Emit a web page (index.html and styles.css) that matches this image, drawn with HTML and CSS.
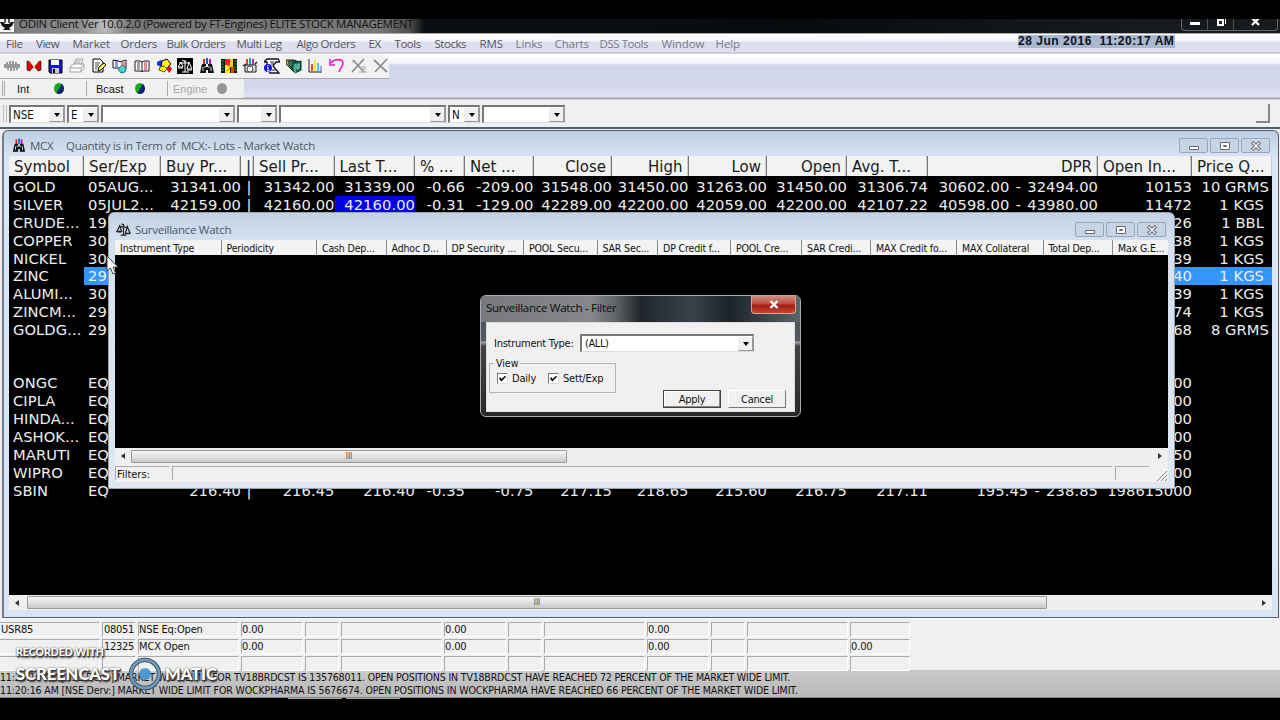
FILE: index.html
```
<!DOCTYPE html>
<html lang="en">
<head>
    <meta charset="UTF-8">
    <meta name="viewport" content="width=device-width, initial-scale=1.0">
    <title>ODIN Client</title>
    <link rel="stylesheet" href="styles.css">
</head>
<body>
    <header class="titlebar">
        <svg class="app-icon" width="14" height="13" viewBox="0 0 14 13"><rect width="14" height="13" fill="#f4f4f4"/><path d="M0 3h3l2 2h4l2-2h3l-2 4-3 2 2 2H3l2-2-3-2z" fill="#111"/><path d="M4 0h2v4H4zM8 0h2v4H8z" fill="#555"/></svg>
        <span class="app-title">ODIN Client Ver 10.0.2.0 (Powered by FT-Engines) ELITE STOCK MANAGEMENT</span>
        <div class="app-buttons">
            <span><svg width="12" height="10" viewBox="0 0 12 10"><path d="M1 3h10v3H1z" fill="#fff"/></svg></span>
            <span><svg width="12" height="10" viewBox="0 0 12 10"><path d="M2 0h7v7H2zM10 0h1v5h-1z" fill="#fff"/><path d="M4 2h3v3H4z" fill="#222"/></svg></span>
            <span class="wide"><svg width="12" height="10" viewBox="0 0 12 10"><path d="M2 -1l7 7M9 -1L2 6" stroke="#fff" stroke-width="2.4"/></svg></span>
        </div>
    </header>

    <nav class="menu">
        <span class="m1">File</span><span class="m2">View</span><span class="m3">Market</span><span class="m4">Orders</span><span class="m5">Bulk Orders</span><span class="m6">Multi Leg</span><span class="m7">Algo Orders</span><span class="m8">EX</span><span class="m9">Tools</span><span class="m10">Stocks</span><span class="m11">RMS</span><span class="m12 dim">Links</span><span class="m13 dim">Charts</span><span class="m14 dim">DSS Tools</span><span class="m15 dim">Window</span><span class="m16 dim">Help</span>
        <time class="clock">28 Jun 2016&nbsp; 11:20:17 AM</time>
    </nav>

    <div class="toolbars">
        <div class="icons">
            <svg viewBox="0 0 16 16"><path d="M0 6h2V4h2v2h1V3h2v3h1V3h2v3h1V4h2v2h3v4h-2v2h-2v-2h-1v3h-2v-3H8v3H6v-3H5v2H3v-2H0z" fill="#999"/></svg>
            <svg viewBox="0 0 16 16"><path d="M1 3l4 1 1 3h4l1-3 4-1v9l-3 1-2-3H6l-2 3-3-1z" fill="#d00" stroke="#300" stroke-width=".6"/><path d="M4 3l4 5 4-5M8 8v3" stroke="#eec" fill="none" stroke-width="1.5"/></svg>
            <svg viewBox="0 0 16 16"><path d="M2 2h13v13H3l-1-1z" fill="#1414d8" stroke="#000"/><path d="M4 2h8v5H4z" fill="#fff"/><path d="M5 10h7v5H5z" fill="#ccc"/><path d="M6 11h2v4H6z" fill="#000"/></svg>
            <svg viewBox="0 0 16 16"><path d="M5 6l2-5h7l-2 6M1 9l3-3h11v5l-3 3H1zM1 10h11v4M12 10l3-3M6 3h6M5 5h6" fill="#fafafa" stroke="#a5a5a5"/></svg>
            <svg viewBox="0 0 16 16"><path d="M2 1h7l3 3v10H2z" fill="#fff" stroke="#000"/><path d="M4 5h5M4 7h4M4 9h3M4 11h2" stroke="#444"/><path d="M7 13l1-4 5-4 2 2-5 5z" fill="#ff5" stroke="#000"/></svg>
            <svg viewBox="0 0 16 16"><path d="M1 2l6 1 1 1 6-2v9H8L7 10H1z" fill="#fff" stroke="#113"/><path d="M3 4h3M3 6h3M3 8h3" stroke="#23d"/><path d="M9 5h4M9 7h4" stroke="#d22"/><path d="M8 9l3-2 3 3-1 4-4 1-3-4z" fill="#5cc" stroke="#177"/></svg>
            <svg viewBox="0 0 16 16"><path d="M1 3h5l2 1 2-1h5v10H9l-1 1-1-1H1zM8 4v9" fill="#fff" stroke="#301020"/><path d="M3 5h3M3 7h3M3 9h3M3 11h3" stroke="#444"/><path d="M10 5h3M10 7h3M10 9h3M10 11h3" stroke="#a22"/></svg>
            <svg viewBox="0 0 16 16"><path d="M1 4l4-2 3 3-3 4-4-2z" fill="#13d"/><path d="M6 3l5-2 4 5-5 5-5-3z" fill="#fe2" stroke="#000"/><path d="M4 9l4-1 3 3-3 3-5-2z" fill="#fe2" stroke="#550"/><path d="M10 10l4-2 2 3-3 4z" fill="#d12"/></svg>
            <svg viewBox="0 0 16 16"><path d="M0 0h16v16H0z" fill="#000"/><path d="M8 2v12M5 14h7M2 5l10 0M4 4L1 9h5zM12 4l-2 7h5zM1 10h5M10 12h5M5 2l4 2" fill="none" stroke="#fff"/></svg>
            <svg viewBox="0 0 16 16"><path d="M5 1v6" stroke="#d22" stroke-width="2"/><path d="M8 0v6" stroke="#06c" stroke-width="2"/><path d="M11 1v6" stroke="#c0c" stroke-width="2"/><path d="M3 6h4v3h2V6h4l2 9H9v-3H7v3H1z" fill="#111"/><path d="M4 9v4M12 9v4M6 8v2M10 8v2" stroke="#ddd"/></svg>
            <svg viewBox="0 0 16 16"><path d="M0 1h16v14H0z" fill="#111"/><path d="M4 1h5v6H4z" fill="#e22"/><path d="M9 1h3v9H9z" fill="#fc2"/><path d="M4 7h5v8H4z" fill="#fe3"/><path d="M10 9h3v6h-3z" fill="#c50"/><path d="M0 3h3M0 6h3M0 9h3M0 12h3M13 3h3M13 6h3M13 9h3M13 12h3" stroke="#2a4"/><path d="M10 3L6 7l4 2-4 4" stroke="#a60" fill="none"/></svg>
            <svg viewBox="0 0 16 16"><path d="M5 1v6" stroke="#d44" stroke-width="2"/><path d="M8 0v7" stroke="#29c" stroke-width="2"/><path d="M11 1v6" stroke="#a3a" stroke-width="2"/><path d="M3 7h11v7H3z" fill="#ddd" stroke="#222"/><circle cx="8" cy="11" r="3" fill="#fff" stroke="#444"/><path d="M1 8l3-2M13 6l2-2" stroke="#222" stroke-width="1.5"/></svg>
            <svg viewBox="0 0 16 16"><path d="M3 1h11l2 3h-4L9 8l6 7H6L3 9V4H0z" fill="#fff" stroke="#112" stroke-width="1.3"/><path d="M6 4h4M8 12h4M7 6h3" stroke="#222"/><circle cx="4" cy="10" r="4" fill="#11d"/><path d="M4 7v1M3 9h1v4M3 13h3" stroke="#fff" fill="none"/></svg>
            <svg viewBox="0 0 16 16"><path d="M0 2h8l2 1v8l-3 2-7-7z" fill="#c93" stroke="#222"/><path d="M3 3h8v9l-3 1-5-6z" fill="#399" stroke="#022"/><path d="M6 5l9-2v9l-6 3-3-3z" fill="#187a58" stroke="#022"/><path d="M9 6v9M11 7l2-1v4l-2 1z" stroke="#8db" fill="none"/></svg>
            <svg viewBox="0 0 16 16"><path d="M2 1v13h13" stroke="#222" fill="none"/><path d="M5 6v7" stroke="#e44" stroke-width="2"/><path d="M8 2v11" stroke="#fd4" stroke-width="2"/><path d="M11 5v8" stroke="#4cd" stroke-width="2"/><path d="M14 8v5" stroke="#55d" stroke-width="1"/></svg>
            <svg viewBox="0 0 16 16"><path d="M2 5c4-5 12-4 12 0 0 4-3 5-4 9" fill="none" stroke="#e020c8" stroke-width="1.6"/><path d="M1 1v6h5" fill="none" stroke="#e020c8" stroke-width="1.6"/></svg>
            <svg viewBox="0 0 16 16"><path d="M2 2l11 12M13 1L1 14" stroke="#888" stroke-width="1.7"/><path d="M10 9h5M9 11h6M8 14h8M1 4h4" stroke="#aaa"/></svg>
            <svg viewBox="0 0 16 16"><path d="M1 2l13 12M14 1L2 14" stroke="#909090" stroke-width="1.8"/></svg>
        </div>
        <div class="connections">
            <span class="conn int">Int<i class="globe"></i></span>
            <span class="conn bcast">Bcast<i class="globe"></i></span>
            <span class="conn engine">Engine<i class="globe off"></i></span>
        </div>
    </div>

    <div class="combos">
        <div class="grip"></div>
        <div class="combo c1">NSE<b></b></div>
        <div class="combo c2">E<b></b></div>
        <div class="combo c3"><b></b></div>
        <div class="combo c4"><b></b></div>
        <div class="combo c5"><b></b></div>
        <div class="combo c6">N<b></b></div>
        <div class="combo c7"><b></b></div>
        <div class="corner"></div>
    </div>

    <main class="workspace">
        <section class="market">
            <div class="win-title">
                <svg width="14" height="15" viewBox="0 0 16 16"><path d="M5 1v6" stroke="#d22" stroke-width="2"/><path d="M8 0v6" stroke="#06c" stroke-width="2"/><path d="M11 1v6" stroke="#c0c" stroke-width="2"/><path d="M3 6h4v3h2V6h4l2 9H9v-3H7v3H1z" fill="#111"/><path d="M4 9v4M12 9v4M6 8v2M10 8v2" stroke="#ddd"/></svg>
                <span class="win-name">MCX</span><span class="win-sub">Quantity is in Term of &nbsp;MCX:- Lots - Market Watch</span>
                <div class="win-buttons">
                    <span><svg width="12" height="10" viewBox="0 0 12 10"><path d="M1.5 5.5h9v3h-9z" fill="#fff" stroke="#667"/></svg></span>
                    <span><svg width="12" height="10" viewBox="0 0 12 10"><path d="M1.5 1.5h9v7h-9zM4.5 4.5h3v1h-3z" fill="#fff" stroke="#667"/></svg></span>
                    <span><svg width="12" height="10" viewBox="0 0 12 10"><path d="M2 1l8 8M10 1L2 9" stroke="#667" stroke-width="3.4"/><path d="M2.5 1.5l7 7M9.5 1.5l-7 7" stroke="#fff" stroke-width="1.3"/></svg></span>
                </div>
            </div>
            <div class="grid" id="market-grid">
                <div class="head">
                    <span>Symbol</span><span>Ser/Exp</span><span>Buy Pr...</span><span class="bar">|</span><span>Sell Pr...</span><span>Last T...</span><span>% ...</span><span>Net ...</span><span class="num">Close</span><span class="num">High</span><span class="num">Low</span><span class="num">Open</span><span>Avg. T...</span><span class="num">DPR</span><span>Open In...</span><span>Price Q...</span>
                </div>
            </div>
            <div class="scrollbar market-scroll"><i class="left"></i><div class="thumb">III</div><i class="right"></i></div>
        </section>

        <section class="surveillance">
            <div class="win-title">
                <svg width="15" height="15" viewBox="0 0 16 16"><path d="M8 2v12M5 14h6M3 5l10 1M4 4L1 10h5zM12 5l-2 7h5zM1 10.5h5M10 12.5h5M6 2l3 2" fill="none" stroke="#222" stroke-width="1.3"/></svg>
                <span class="win-name">Surveillance Watch</span>
                <div class="win-buttons">
                    <span><svg width="12" height="10" viewBox="0 0 12 10"><path d="M1.5 5.5h9v3h-9z" fill="#fff" stroke="#667"/></svg></span>
                    <span><svg width="12" height="10" viewBox="0 0 12 10"><path d="M1.5 1.5h9v7h-9zM4.5 4.5h3v1h-3z" fill="#fff" stroke="#667"/></svg></span>
                    <span><svg width="12" height="10" viewBox="0 0 12 10"><path d="M2 1l8 8M10 1L2 9" stroke="#667" stroke-width="3.4"/><path d="M2.5 1.5l7 7M9.5 1.5l-7 7" stroke="#fff" stroke-width="1.3"/></svg></span>
                </div>
            </div>
            <div class="columns">
                <span>Instrument Type</span><span>Periodicity</span><span>Cash Dep...</span><span>Adhoc D...</span><span>DP Security ...</span><span>POOL Secu...</span><span>SAR Sec...</span><span>DP Credit f...</span><span>POOL Cre...</span><span>SAR Credi...</span><span>MAX Credit fo...</span><span>MAX Collateral</span><span>Total Dep...</span><span>Max G.E...</span>
            </div>
            <div class="empty"></div>
            <div class="scrollbar watch-scroll"><i class="left"></i><div class="thumb">III</div><i class="right"></i></div>
            <div class="filters">
                <span class="pane filters-label">Filters:</span><span class="pane filters-text"></span><span class="pane filters-end"></span>
                <svg width="12" height="12" viewBox="0 0 12 12"><path d="M1 11L11 1M5 11l6-6M9 11l2-2" stroke="#888"/></svg>
            </div>
        </section>

        <section class="dialog">
            <div class="dialog-title"><span>Surveillance Watch - Filter</span>
                <button type="button" class="close"><svg width="12" height="9" viewBox="0 0 12 9"><path d="M2.5 1l7 7M9.5 1l-7 7" stroke="#fff" stroke-width="2.4"/></svg></button>
            </div>
            <div class="dialog-body">
                <div class="field"><label>Instrument Type:</label><div class="combo type">(ALL)<b></b></div></div>
                <div class="view">
                    <span class="legend">View</span>
                    <span class="check"><svg viewBox="0 0 12 12"><path d="M2 5l2.500 3.500L10 3" fill="none" stroke="#000" stroke-width="2"/></svg></span><span class="daily">Daily</span>
                    <span class="check"><svg viewBox="0 0 12 12"><path d="M2 5l2.500 3.500L10 3" fill="none" stroke="#000" stroke-width="2"/></svg></span><span>Sett/Exp</span>
                </div>
                <div class="actions"><div class="btn default">Apply</div><div class="btn">Cancel</div></div>
            </div>
        </section>

        <svg class="cursor" width="13" height="21" viewBox="0 0 13 21"><path d="M1 1v15l3.500-3 2.500 6 2.500-1-2.500-6h5z" fill="#fff" stroke="#444"/></svg>
    </main>

    <footer class="status">
        <div class="status-row"><span>USR85</span><span class="code">08051</span><span>NSE Eq:Open</span><span>0.00</span><span></span><span></span><span>0.00</span><span></span><span></span><span>0.00</span><span></span><span></span><span></span></div>
        <div class="status-row"><span></span><span class="code">12325</span><span>MCX Open</span><span>0.00</span><span></span><span></span><span>0.00</span><span></span><span></span><span>0.00</span><span></span><span></span><span>0.00</span></div>
        <div class="status-row last"><span></span><span></span><span></span><span></span><span></span><span></span><span></span><span></span><span></span><span></span><span></span><span></span><span></span></div>
        <div class="messages">
            <p class="msg1">11:20:16 AM [NSE Derv:] MARKET WIDE LIMIT FOR TV18BRDCST IS 135768011. OPEN POSITIONS IN TV18BRDCST HAVE REACHED 72 PERCENT OF THE MARKET WIDE LIMIT.</p>
            <p class="msg2">11:20:16 AM [NSE Derv:] MARKET WIDE LIMIT FOR WOCKPHARMA IS 5676674. OPEN POSITIONS IN WOCKPHARMA HAVE REACHED 66 PERCENT OF THE MARKET WIDE LIMIT.</p>
        </div>
        <div class="taskbar"><i></i><i></i></div>
    </footer>

    <div class="watermark">
        <div class="recorded">RECORDED WITH</div>
        <div class="brand"><span class="cast">SCREENCAST</span><svg width="34" height="34" viewBox="0 0 34 34"><circle cx="17" cy="17" r="14" fill="none" stroke="#456" stroke-width="4.500"/><circle cx="17" cy="17" r="14" fill="none" stroke="#6d9cbd" stroke-width="2.500"/><circle cx="17" cy="17" r="6" fill="#4a9bd4"/></svg><span class="matic">MATIC</span></div>
    </div>

    <script>
        const rows = [
            ['GOLD', '05AUG...', '31341.00', '|', '31342.00', '31339.00', '-0.66', '-209.00', '31548.00', '31450.00', '31263.00', '31450.00', '31306.74', '30602.00 - 32494.00', '10153', '10 GRMS'],
            ['SILVER', '05JUL2...', '42159.00', '|', '42160.00', '42160.00', '-0.31', '-129.00', '42289.00', '42200.00', '42059.00', '42200.00', '42107.22', '40598.00 - 43980.00', '11472', '1 KGS'],
            ['CRUDE...', '19', '', '', '', '', '', '', '', '', '', '', '', '', '26', '1 BBL'],
            ['COPPER', '30', '', '', '', '', '', '', '', '', '', '', '', '', '38', '1 KGS'],
            ['NICKEL', '30', '', '', '', '', '', '', '', '', '', '', '', '', '39', '1 KGS'],
            ['ZINC', '29', '', '', '', '', '', '', '', '', '', '', '', '', '40', '1 KGS'],
            ['ALUMI...', '30', '', '', '', '', '', '', '', '', '', '', '', '', '39', '1 KGS'],
            ['ZINCM...', '29', '', '', '', '', '', '', '', '', '', '', '', '', '74', '1 KGS'],
            ['GOLDG...', '29', '', '', '', '', '', '', '', '', '', '', '', '', '68', '8 GRMS'],
            [],
            [],
            ['ONGC', 'EQ', '', '', '', '', '', '', '', '', '', '', '', '', '00', ''],
            ['CIPLA', 'EQ', '', '', '', '', '', '', '', '', '', '', '', '', '00', ''],
            ['HINDA...', 'EQ', '', '', '', '', '', '', '', '', '', '', '', '', '00', ''],
            ['ASHOK...', 'EQ', '', '', '', '', '', '', '', '', '', '', '', '', '00', ''],
            ['MARUTI', 'EQ', '', '', '', '', '', '', '', '', '', '', '', '', '50', ''],
            ['WIPRO', 'EQ', '', '', '', '', '', '', '', '', '', '', '', '', '00', ''],
            ['SBIN', 'EQ', '216.40', '|', '216.45', '216.40', '-0.35', '-0.75', '217.15', '218.65', '215.60', '216.75', '217.11', '195.45 - 238.85', '198615000', '']
        ];

        const grid = document.getElementById('market-grid');
        rows.forEach(cells => {
            const row = document.createElement('div');
            row.className = 'row';
            if (cells[0] === 'ZINC') row.classList.add('selected');
            if (cells[0] === 'SILVER') row.classList.add('updated');
            cells.forEach(text => {
                const cell = document.createElement('span');
                cell.textContent = text;
                // GRMS is one letter wider than the other units
                if (text.endsWith('GRMS')) cell.className = 'wide-unit';
                row.appendChild(cell);
            });
            grid.appendChild(row);
        });
    </script>
</body>
</html>
```
FILE: styles.css
```
* {
    box-sizing: border-box;
}

body {
    margin: 0;
    width: 1280px;
    height: 720px;
    overflow: hidden;
    position: relative;
    background: #000;
    padding-top: 19px;
    font-family: "DejaVu Sans Condensed", "DejaVu Sans", sans-serif;
    font-size: 11px;
    color: #111;
}

/* main window title */
.titlebar {
    height: 15px;
    display: flex;
    align-items: flex-start;
    background: linear-gradient(90deg, #777 0, #8d8d8d 80px, #bbb 105px, #777 130px, #777 380px, #4c4c4c 410px, #0b0f13 424px, #080b0e 800px, #15191d 1100px, #181b1e 1280px);
    border-bottom: 1px solid #a8a8aa;
}

.app-title {
    margin-left: 5px;
    margin-top: -1px;
    font-family: "Open Sans", "Noto Sans", sans-serif;
    font-size: 11.5px;
    line-height: 12px;
    letter-spacing: -0.3px;
    white-space: nowrap;
}

.app-buttons {
    margin-left: auto;
    margin-right: 2px;
    display: flex;
    height: 12px;
    border: 1px solid #666;
    border-top: 0;
    border-radius: 0 0 4px 4px;
}

.app-buttons span {
    width: 26px;
    display: flex;
    justify-content: center;
    border-right: 1px solid #555;
}

.app-buttons .wide {
    width: 43px;
    border-right: 0;
}

/* menu */
.menu {
    height: 21px;
    display: flex;
    background: linear-gradient(#fff, #f5f6fb 7px, #dcdfee 8px, #dfe1f0 18px, #a9a9ae 19px, #fff 20px);
    font-family: "Open Sans", "Noto Sans", sans-serif;
    font-size: 11.500px;
    line-height: 20px;
    letter-spacing: -0.45px;
    color: #55565e;
    padding-left: 6px;
    white-space: nowrap;
}

.menu .dim { color: #77788a; }

.m1 { width: 30px; }
.m2 { width: 36.500px; }
.m3 { width: 48px; }
.m4 { width: 46px; }
.m5 { width: 70px; }
.m6 { width: 60px; }
.m7 { width: 72px; }
.m8 { width: 26px; }
.m9 { width: 40px; }
.m10 { width: 45px; }
.m11 { width: 36px; }
.m12 { width: 39px; }
.m13 { width: 45px; }
.m14 { width: 62px; }
.m15 { width: 54px; }
.m16 { width: 30px; }

.m3, .m4, .m11, .m12, .m13, .m15, .m16 { letter-spacing: -0.1px; }

.clock {
    margin-left: auto;
    margin-right: 105px;
    width: 157px;
    height: 13px;
    margin-top: 1px;
    background: #a9b8cf;
    color: #0c1220;
    font-family: "Liberation Sans", Arial, sans-serif;
    font-weight: bold;
    font-size: 12px;
    line-height: 13px;
    letter-spacing: 0.53px;
}

/* toolbars */
.toolbars {
    height: 45px;
    background: linear-gradient(#fff, #f3f5fb 8px, #d2d6ea 10px, #d2d6ea 30px, #dfe2f2 42px, #a6a6a6 43px, #a6a6a6 44px, #fff 45px);
}

.icons {
    width: 389px;
    height: 24px;
    padding-left: 1px;
    display: flex;
    align-items: center;
    background: #f2f2f3;
    border-bottom: 1px solid #aaa;
}

.icons svg {
    width: 16px;
    height: 16px;
    margin: -2px 2.850px 0;
    flex: none;
}

.connections {
    width: 244px;
    height: 19px;
    background: #f0f0f1;
    display: flex;
    align-items: center;
    font-family: "Liberation Sans", Arial, sans-serif;
    font-size: 11px;
    border-left: 2px solid #f0f0f0;
}

.conn {
    display: flex;
    align-items: center;
    justify-content: space-between;
    height: 15px;
    border-left: 1px solid #aaa;
}

.int { width: 84px; padding: 0 22px 0 12px; border-left: 3px double #aaa; }
.bcast { width: 81px; padding: 0 22px 0 9px; }
.engine { width: 77px; padding: 0 17px 0 5px; color: #aaa; }

.globe {
    width: 10px;
    height: 11px;
    border-radius: 50%;
    background: linear-gradient(120deg, #1aa81a 48%, #0b2f8c 52%, #061038);
}

.off { background: #969696; }

.combos {
    height: 27px;
    display: flex;
    align-items: flex-start;
    padding: 5px 0 0 3px;
    background: #f0f0f0;
    font-size: 11.500px;
}

.grip {
    width: 4px;
    height: 17px;
    margin-right: 2px;
    border: 1px solid #bbb;
    border-width: 0 1px;
}

.combo {
    height: 18px;
    background: #fff;
    border: 1px solid #777;
    border-width: 2px 1px 1px 2px;
    border-right-color: #999;
    border-bottom-color: #ddd;
    padding-left: 2px;
    display: flex;
    align-items: center;
    justify-content: space-between;
    margin-right: 2px;
}

.combo b {
    width: 15px;
    height: 15px;
    margin-left: auto;
    background: #f0f0f0;
    border: 1px solid #999;
    border-top-color: #fff;
    border-left-color: #eee;
    display: flex;
    align-items: center;
    justify-content: center;
}

.combo b::after {
    content: "";
    border: 3.500px solid transparent;
    border-top: 4px solid #000;
    border-bottom: 0;
}

.c1 { width: 56px; }
.c2 { width: 32px; }
.c3 { width: 134px; }
.c4 { width: 40px; }
.c5 { width: 167px; }
.c6 { width: 32px; }
.c7 { width: 83px; }

.corner {
    width: 14px;
    height: 19px;
    margin: -1px 10px 0 auto;
    border-right: 2px solid #888;
    border-bottom: 2px solid #888;
}

/* child windows */
.workspace {
    height: 491px;
    background: #eee;
    border-top: 2px solid #4d6072;
}

.market {
    height: 488px;
    margin: 1px 1px 0 2px;
    border: 1px solid #555e68;
    border-left: 2px solid #6f7e8c;
    border-radius: 6px 6px 0 0;
    background: linear-gradient(#bccee2, #ccdaea 14px, #dbe6f4 30px, #d9e5f5);
    padding: 0 6px 7px 5px;
    display: flex;
    flex-direction: column;
}

.win-title {
    height: 27px;
    display: flex;
    align-items: center;
    font-family: "Open Sans", "Noto Sans", sans-serif;
    font-size: 11.500px;
    color: #4d5866;
    letter-spacing: -0.27px;
    white-space: nowrap;
}

.market .win-title {
    height: 25px;
    padding: 4px 2px 0 3px;
}

.market .win-name {
    margin-left: 4px;
    width: 36px;
}

.win-buttons {
    margin-left: auto;
    display: flex;
    gap: 2px;
}

.win-buttons span {
    width: 29px;
    height: 15px;
    display: flex;
    align-items: center;
    justify-content: center;
    border: 1px solid #97a6b8;
    border-radius: 2px;
    background: #c6d4e4;
}

.grid {
    flex: 1;
    min-height: 0;
    overflow: hidden;
    background: #000;
    color: #eee;
    font-family: "DejaVu Sans", Verdana, sans-serif;
    font-size: 14.700px;
    white-space: nowrap;
}

.head,
.row {
    display: grid;
    grid-template-columns: 75px 77px 80px 13px 80.500px 80.500px 50px 68.500px 78.500px 76.500px 78.500px 80px 81px 170px 94px 80px;
}

.head {
    height: 20px;
    margin-bottom: 2.200px;
    background: #f2f2f2;
    color: #1b1b1b;
    font-size: 15px;
    line-height: 22px;
}

.head span {
    padding: 0 5px;
    border-right: 1px solid #777;
    box-shadow: inset -1px 0 #ccc;
    overflow: hidden;
}

.head span:last-child { border-right: 0; }
.head .bar { padding: 0 0 0 5px; }
.head .num { text-align: right; }

.row {
    height: 17.850px;
    line-height: 18px;
    letter-spacing: 0.08px;
}

.row span {
    text-align: right;
}

.row span:nth-child(-n+2) {
    text-align: left;
    padding-left: 4px;
}

.row span:nth-child(4) { text-align: center; padding-left: 3px; }
.row span:nth-child(14) { word-spacing: 1.500px; }
.row span:last-child { padding-right: 8px; }
.row .wide-unit:last-child { padding-right: 3px; }

.selected span:not(:first-child) {
    background: #3396fb;
}

.updated span:nth-child(6) {
    background: #0202e6;
}

.scrollbar {
    height: 15px;
    display: flex;
    align-items: center;
    background: #efeff0;
}

.scrollbar i {
    border: 3px solid transparent;
}

.scrollbar .left { border-right: 4px solid #333; border-left: 0; margin: 0 8px 0 6px; }
.scrollbar .right { border-left: 4px solid #333; border-right: 0; margin: 0 6px 0 auto; }

.thumb {
    height: 13px;
    border: 1px solid #999;
    border-radius: 1px;
    background: linear-gradient(#f5f5f5, #e2e2e2 50%, #c8c8c8);
    text-align: center;
    font-size: 8px;
    line-height: 11px;
    color: #444;
}

.market-scroll .thumb { width: 1020px; }

.surveillance {
    position: absolute;
    left: 108px;
    top: 212px;
    width: 1067px;
    height: 277px;
    padding: 0 6px 6px;
    border: 1px solid #9aa4ae;
    border-radius: 6px 6px 0 0;
    background: linear-gradient(#c2d2e4, #d5e1ef 30px, #dee7f1);
    display: flex;
    flex-direction: column;
}

.surveillance .win-title {
    padding: 6px 2px 0 1px;
}

.surveillance .win-name {
    margin-left: 4px;
}

.columns {
    height: 15px;
    display: grid;
    grid-template-columns: 106.500px 95.500px 69.500px 60px 77.500px 73.500px 60.500px 73px 71px 69px 86px 86.500px 69.500px 55px;
    background: #f3f3f3;
    line-height: 16px;
    font-size: 10.500px;
    letter-spacing: -0.15px;
    white-space: nowrap;
}

.columns span {
    padding-left: 5px;
    border-right: 1px solid #888;
}

.columns span:last-child { border-right: 0; }

.empty {
    flex: 1;
    background: #000;
}

.watch-scroll { height: 16px; }
.watch-scroll .thumb { width: 436px; margin-left: -2px; }

.filters {
    height: 18px;
    padding-top: 2px;
    background: #f0f0f0;
    display: flex;
    align-items: flex-start;
    gap: 3px;
}

.pane {
    height: 14px;
    border-top: 1px solid #aaa;
    border-left: 1px solid #aaa;
    line-height: 15px;
}

.filters-label { width: 54px; padding-left: 1px; }
.filters-text { width: 940px; }
.filters-end { width: 34px; }
.filters svg { margin: 4px 0 0 auto; }

/* filter dialog */
.dialog {
    position: absolute;
    left: 480px;
    top: 295px;
    width: 321px;
    height: 122px;
    padding: 0 5px 5px;
    border: 1px solid #aab;
    border-radius: 6px;
    background: linear-gradient(#4b4e52 0, #555a60 45px, #aaa 46px, #444 50px, #282828 100%);
}

.dialog-title {
    height: 26px;
    margin: 0 -5px;
    padding-left: 5px;
    border-radius: 5px 5px 0 0;
    background: linear-gradient(90deg, #77797d, #85878b 110px, #606368 135px, #20262c 160px, #39424b 210px, #1c2329 250px, #5d666e 320px);
    display: flex;
    font-family: "Open Sans", "Noto Sans", sans-serif;
    font-size: 11.500px;
    letter-spacing: -0.27px;
    line-height: 24px;
    color: #0c0c0c;
    white-space: nowrap;
}

.close {
    margin: 0 4px 0 auto;
    width: 45px;
    height: 18px;
    padding: 0;
    display: flex;
    align-items: center;
    justify-content: center;
    background: linear-gradient(#cf8d84, #bd4a3c 48%, #a51d10 52%, #c04432);
    border: 1px solid #d8a8a0;
    border-top: 0;
    border-radius: 0 0 4px 4px;
}

.dialog-body {
    height: 90px;
    background: #f0f0f0;
    border: 1px solid #ddd;
    display: flex;
    flex-direction: column;
    padding: 11px 8px 0 6px;
}

.field {
    display: flex;
    align-items: center;
    padding-left: 1px;
}

.field label {
    width: 86px;
    letter-spacing: -0.25px;
    white-space: nowrap;
}

.type {
    width: 174px;
    height: 18px;
    padding-left: 3px;
    font-size: 11px;
    letter-spacing: -0.4px;
}

.view {
    width: 127px;
    height: 30px;
    margin: 11px 0 0 -4px;
    border: 1px solid #b5b5b5;
    display: grid;
    grid-template-columns: 12px 39px 12px 1fr;
    grid-template-rows: 6px 16px;
    align-items: center;
    padding-left: 7px;
}

.legend {
    grid-column: 1 / -1;
    justify-self: start;
    margin: -8px 0 0 -3px;
    padding: 0 2px;
    line-height: 12px;
    background: #f0f0f0;
    font-size: 10.500px;
}

.check {
    width: 11px;
    height: 11px;
    background: #fff;
    border: 1px solid #777;
    border-right-color: #ddd;
    border-bottom-color: #ddd;
    display: flex;
}

.view > span:not(.legend):not(.check) { padding-left: 3px; letter-spacing: -0.2px; }

.actions {
    display: flex;
    justify-content: flex-end;
    gap: 7px;
    margin-top: -3px;
}

.btn {
    width: 58px;
    height: 18px;
    line-height: 17px;
    text-align: center;
    letter-spacing: -0.25px;
    border: 1px solid #fff;
    border-right-color: #777;
    border-bottom-color: #777;
}

.default {
    border: 1px solid #444;
    box-shadow: inset -1px -1px #888, inset 1px 1px #fff;
}

.cursor {
    position: absolute;
    left: 106px;
    top: 255px;
}

/* status bar */
.status {
    height: 101px;
    background: #f0f0f0;
    padding-top: 3px;
    border-top: 1px solid #fff;
}

.status-row {
    height: 17px;
    display: grid;
    grid-template-columns: 100px 34px 101px 62px 34px 101px 62px 34px 101px 62px 34px 101px 60px;
    column-gap: 2px;
}

.status-row span {
    height: 15px;
    line-height: 14px;
    border-top: 1px solid #aaa;
    border-left: 1px solid #aaa;
    border-right: 1px solid #fff;
    border-bottom: 1px solid #fff;
    letter-spacing: -0.15px;
    white-space: nowrap;
}

.status-row span:first-child { border-left: 0; padding-left: 1px; }
.status-row .code { text-align: center; letter-spacing: -0.3px; }

.last { height: 15px; }

.messages {
    height: 28px;
    margin-top: -1px;
    background: linear-gradient(#c9c9c9, #b9b9b9);
    border-bottom: 1px solid #888;
    font-size: 10.500px;
}

.messages p {
    margin: 0;
    height: 13px;
    line-height: 15px;
    white-space: nowrap;
}

.msg1 { letter-spacing: -0.16px; }
.msg2 { letter-spacing: -0.125px; }

.taskbar {
    height: 21px;
    background: #000;
    padding-left: 288px;
    display: flex;
    gap: 4px;
}

.taskbar i {
    width: 54px;
    height: 1px;
    background: #aaa;
}

.watermark {
    position: absolute;
    left: 16px;
    top: 646px;
    color: #fff;
    font-family: "Lato", "Open Sans", sans-serif;
    font-weight: 900;
    text-shadow: 1px 1px 1px #333, 1px 2px 2px #333, 0 0 2px #555;
    white-space: nowrap;
}

.recorded {
    font-size: 10.500px;
    line-height: 13px;
}

.brand {
    display: flex;
    align-items: center;
    margin-top: -2px;
    font-size: 16.500px;
    line-height: 34px;
}

.cast { width: 112px; }
.matic { margin-left: 3px; }
```
